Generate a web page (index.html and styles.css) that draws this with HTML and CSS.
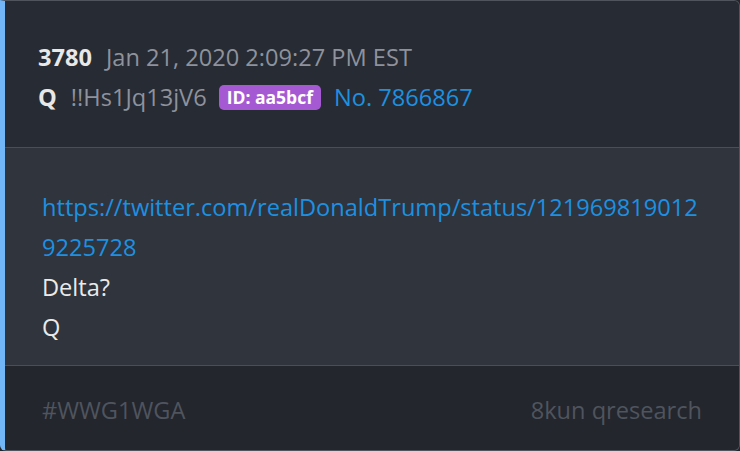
FILE: index.html
```html
<!DOCTYPE html>
<html>
<head>
<meta charset="utf-8">
<link rel="stylesheet" href="styles.css">
</head>
<body>
<div class="card">
  <div class="head">
    <div class="row"><span class="num">3780</span><span class="date">Jan 21, 2020 2:09:27 PM EST</span></div>
    <div class="row"><span class="num">Q</span><span class="trip">!!Hs1Jq13jV6</span><span class="badge">ID: aa5bcf</span><span class="no">No. 7866867</span></div>
  </div>
  <div class="body">
    <a class="link">https://twitter.com/realDonaldTrump/status/1219698190129225728</a>
    <div>Delta?</div>
    <div>Q</div>
  </div>
  <div class="foot">
    <span>#WWG1WGA</span>
    <span>8kun qresearch</span>
  </div>
</div>
</body>
</html>
```
FILE: styles.css
```css
html, body { margin: 0; padding: 0; background: #23262d; }
body { width: 740px; height: 451px; overflow: hidden; font-family: "Open Sans", "Noto Sans", sans-serif; }
.card {
  box-sizing: border-box;
  width: 740px; height: 451px;
  border: 1px solid #50545c;
  border-left: 5px solid #72b6f7;
  border-radius: 0 6px 6px 6px;
  display: flex; flex-direction: column;
  overflow: hidden;
  background: #2f343d;
}
.head {
  background: #272b33;
  height: 147px;
  box-sizing: border-box;
  padding: 36px 0 0 33px;
  border-bottom: 1px solid #4a4e56;
}
.row { display: flex; align-items: center; height: 40px; font-size: 23.6px; }
.num { color: #e8e8e8; font-weight: 700; margin-right: 14px; }
.date { color: #8e929c; }
.trip { color: #8e929c; margin-right: 12px; }
.badge {
  background: #a55ad3; color: #fff; font-weight: 700; font-size: 17.5px;
  border-radius: 5px; padding: 0 8px; height: 25px; line-height: 25px; margin-right: 13px;
}
.no { color: #1e90e0; }
.body {
  height: 218px;
  box-sizing: border-box;
  padding: 39px 30px 0 37px;
  font-size: 23.6px; line-height: 40px; color: #eaeaea;
  border-bottom: 1px solid #4a4e56;
}
.link { color: #1e90e0; word-break: break-all; display: block; }
.foot {
  flex: 1;
  background: #23262d;
  display: flex; justify-content: space-between; align-items: center;
  padding: 4px 37px 0 37px;
  font-size: 23.6px; color: #4f545d;
}
```
